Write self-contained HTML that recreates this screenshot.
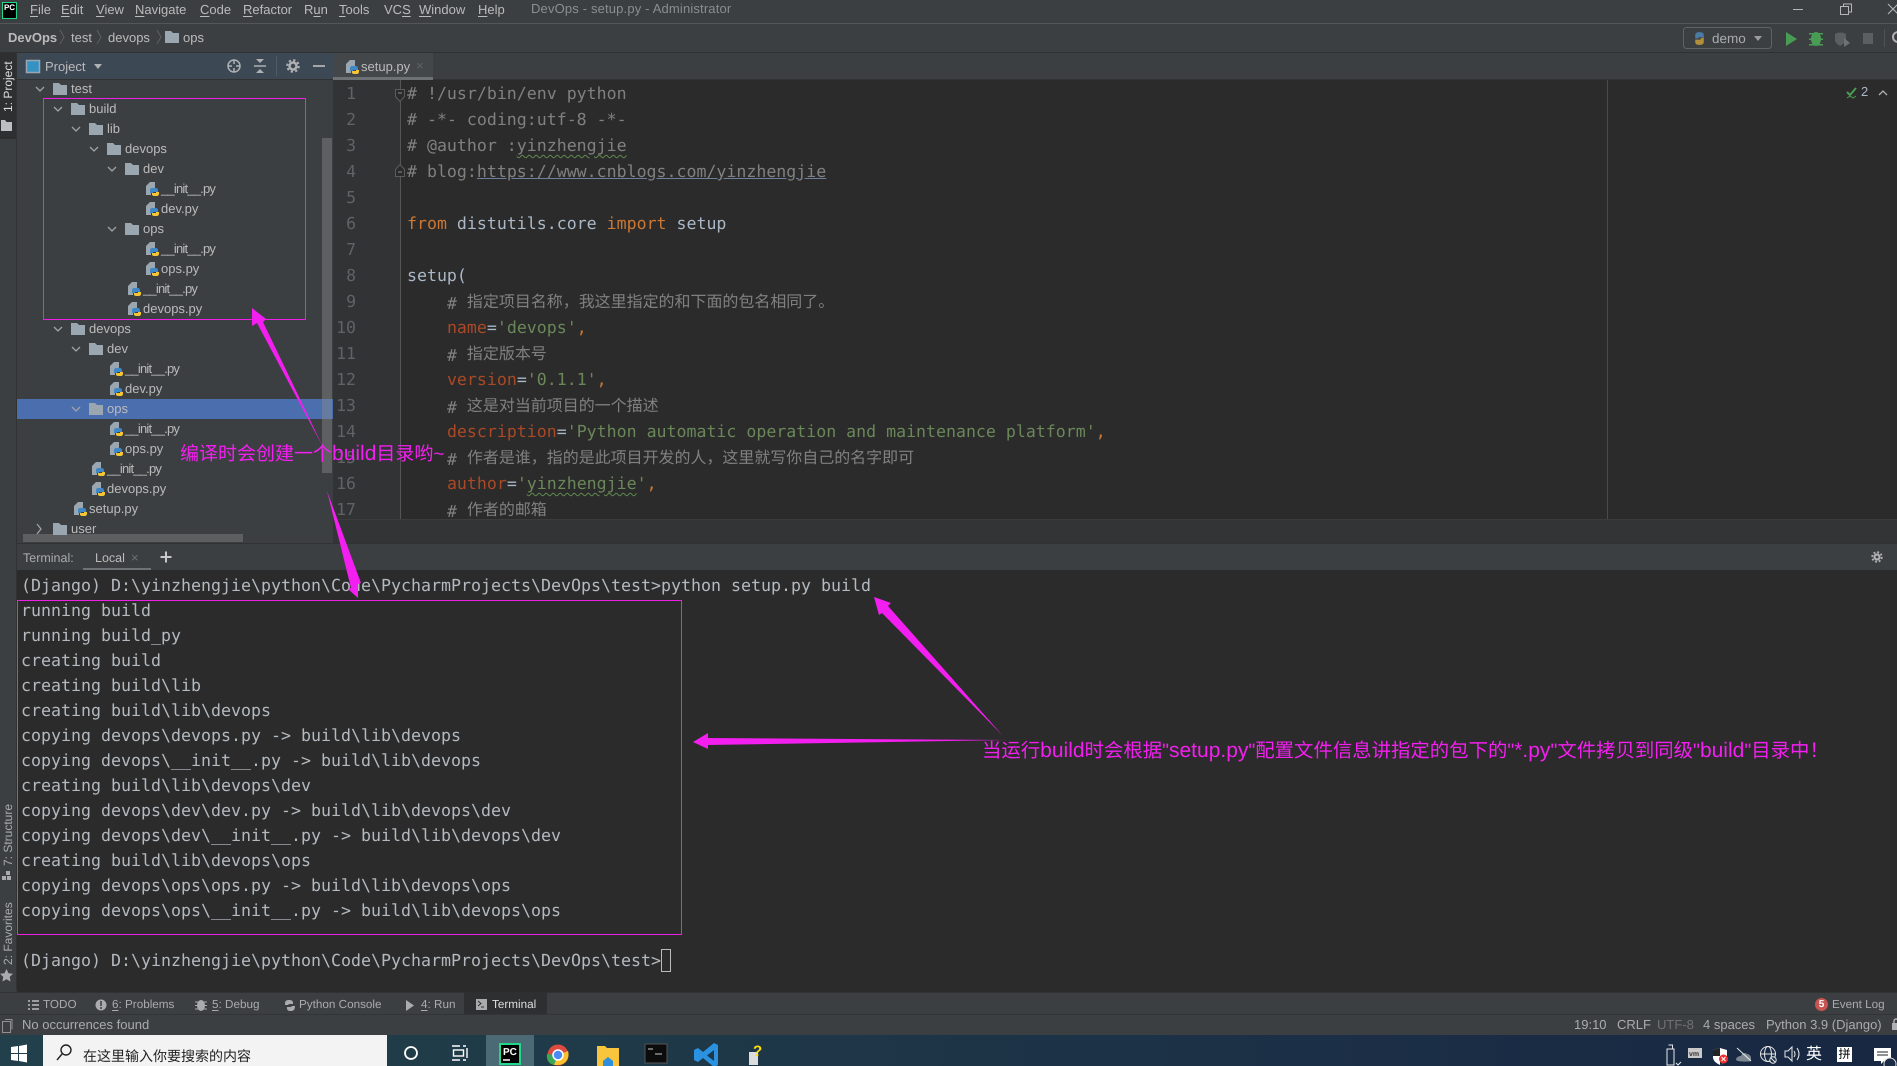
<!DOCTYPE html>
<html lang="zh"><head><meta charset="utf-8"><title>DevOps - setup.py</title>
<style>
html,body{margin:0;padding:0;width:1897px;height:1066px;overflow:hidden;background:#3c3f41}
body{position:relative;font-family:"Liberation Sans","Noto Sans CJK SC",sans-serif;font-size:13px;color:#bbb;text-rendering:geometricPrecision}
.a{position:absolute}
.t{position:absolute;white-space:pre;line-height:20px;height:20px}
.r{position:absolute;white-space:pre;line-height:20px;height:20px;color:#bbb;font-size:13px}
.i{letter-spacing:-.8px}
.c{position:absolute;left:0;white-space:pre;font-family:"DejaVu Sans Mono","Noto Sans CJK SC",monospace;font-size:16.58px;line-height:26px;height:26px;color:#a9b7c6}
.c b{font-weight:normal;font-size:15.98px;font-family:"Noto Sans CJK SC",sans-serif;color:#808080;position:relative;top:-2px}
.g{color:#808080}.k{color:#cc7832}.n{color:#aa4926}.s{color:#6a8759}
.w{text-decoration:underline wavy #5f8a4f 1px;text-underline-offset:3px}
.u{text-decoration:underline;color:#808080;text-decoration-color:#6e7f9e}
.ln{position:absolute;left:333px;width:23px;text-align:right;font-family:"DejaVu Sans Mono",monospace;font-size:16.5px;line-height:26px;color:#606366;white-space:pre}
.o{position:absolute;left:21px;white-space:pre;font-family:"DejaVu Sans Mono",monospace;font-size:16.62px;line-height:25px;height:25px;color:#b3b9bf}
.v{position:absolute;writing-mode:vertical-rl;transform:rotate(180deg);white-space:pre;font-size:12px;color:#bbb;line-height:16px}
.m u,.b u{text-underline-offset:2px}
.an{position:absolute;white-space:pre;color:#f31ff0;line-height:26px;height:26px}
.an i{font-style:normal;font-size:21px}
</style></head><body>

<!-- title and nav -->
<div class="a" style="left:0;top:0;width:1897px;height:23px;background:#3c3f41;border-bottom:1px solid #54575a"></div>
<div class="a" style="left:0;top:24px;width:1897px;height:28px;background:#3c3f41;border-bottom:1px solid #2f3132"></div>
<div class="m">
<span class="t" style="left:30px;top:0"><u>F</u>ile</span>
<span class="t" style="left:61px;top:0"><u>E</u>dit</span>
<span class="t" style="left:96px;top:0"><u>V</u>iew</span>
<span class="t" style="left:135px;top:0"><u>N</u>avigate</span>
<span class="t" style="left:200px;top:0"><u>C</u>ode</span>
<span class="t" style="left:243px;top:0"><u>R</u>efactor</span>
<span class="t" style="left:304px;top:0">R<u>u</u>n</span>
<span class="t" style="left:339px;top:0"><u>T</u>ools</span>
<span class="t" style="left:384px;top:0">VC<u>S</u></span>
<span class="t" style="left:419px;top:0"><u>W</u>indow</span>
<span class="t" style="left:478px;top:0"><u>H</u>elp</span>
<span class="t" style="left:531px;top:-1px;color:#8b8e90;letter-spacing:.16px">DevOps - setup.py - Administrator</span>
</div>
<span class="a" style="left:2px;top:2px;width:15px;height:17px;background:#000;border:1px solid #21d789;box-sizing:border-box;color:#fff;font:bold 8px/9px 'Liberation Sans',sans-serif;text-align:center">PC</span>
<span class="t" style="left:8px;top:28px;font-weight:bold;color:#bbb">DevOps</span>
<span class="t" style="left:71px;top:28px">test</span>
<span class="t" style="left:108px;top:28px">devops</span>
<span class="t" style="left:183px;top:28px">ops</span>

<!-- left stripe -->
<div class="a" style="left:0;top:53px;width:17px;height:938px;background:#3c3f41;border-right:1px solid #323232;box-sizing:border-box"></div>
<div class="a" style="left:0;top:53px;width:16px;height:86px;background:#2d2f30"></div>
<span class="v" style="left:0;top:62px;color:#ddd;height:50px">1: Project</span>
<span class="v" style="left:0;top:806px;height:60px;color:#a9abad">7: Structure</span>
<span class="v" style="left:0;top:905px;height:60px;color:#a9abad">2: Favorites</span>

<!-- project pane -->
<div class="a" style="left:17px;top:53px;width:316px;height:26px;background:#3d4855;border-bottom:1px solid #323232"></div>
<div class="a" style="left:17px;top:80px;width:316px;height:463px;background:#3c3f41"></div>
<span class="t" style="left:45px;top:57px;color:#bbb">Project</span>
<div class="a" style="left:17px;top:399px;width:316px;height:20px;background:#4b6eaf"></div>

<span class="r" style="left:71px;top:79px">test</span>
<span class="r" style="left:89px;top:99px">build</span>
<span class="r" style="left:107px;top:119px">lib</span>
<span class="r" style="left:125px;top:139px">devops</span>
<span class="r" style="left:143px;top:159px">dev</span>
<span class="r i" style="left:161px;top:179px">__init__.py</span>
<span class="r" style="left:161px;top:199px">dev.py</span>
<span class="r" style="left:143px;top:219px">ops</span>
<span class="r i" style="left:161px;top:239px">__init__.py</span>
<span class="r" style="left:161px;top:259px">ops.py</span>
<span class="r i" style="left:143px;top:279px">__init__.py</span>
<span class="r" style="left:143px;top:299px">devops.py</span>
<span class="r" style="left:89px;top:319px">devops</span>
<span class="r" style="left:107px;top:339px">dev</span>
<span class="r i" style="left:125px;top:359px">__init__.py</span>
<span class="r" style="left:125px;top:379px">dev.py</span>
<span class="r" style="left:107px;top:399px">ops</span>
<span class="r i" style="left:125px;top:419px">__init__.py</span>
<span class="r" style="left:125px;top:439px">ops.py</span>
<span class="r i" style="left:107px;top:459px">__init__.py</span>
<span class="r" style="left:107px;top:479px">devops.py</span>
<span class="r" style="left:89px;top:499px">setup.py</span>
<span class="r" style="left:71px;top:519px">user</span>

<div class="a" style="left:322px;top:138px;width:10px;height:335px;background:rgba(140,140,140,.42)"></div>
<div class="a" style="left:23px;top:534px;width:220px;height:8px;background:#5c5e60"></div>
<div class="a" style="left:43px;top:98px;width:261px;height:220px;border:1px solid #ef1fe8"></div>

<!-- editor -->
<div class="a" style="left:333px;top:53px;width:1564px;height:26px;background:#3c3f41;border-bottom:1px solid #323232"></div>
<div class="a" style="left:333px;top:53px;width:100px;height:27px;background:#43474a"></div>
<div class="a" style="left:333px;top:77px;width:100px;height:3px;background:#6e7275"></div>
<span class="t" style="left:361px;top:57px;color:#bbb">setup.py</span>
<span class="t" style="left:416px;top:56px;color:#5f6264">×</span>
<div class="a" style="left:333px;top:80px;width:1564px;height:439px;background:#2b2b2b;overflow:hidden"></div>
<div class="a" style="left:333px;top:80px;width:67px;height:439px;background:#313335;border-right:1px solid #555;overflow:hidden"></div>
<div class="a" style="left:1607px;top:80px;width:1px;height:439px;background:#4a4a4a"></div>
<div class="a" style="left:333px;top:519px;width:1564px;height:24px;background:#323436;border-top:1px solid #3a3c3d;box-sizing:border-box"></div>

<div class="ln" style="top:81px;height:438px;overflow:hidden">1
2
3
4
5
6
7
8
9
10
11
12
13
14
15
16
17</div>
<div class="a" style="left:407px;top:81px;width:1190px;height:438px;overflow:hidden">
<div class="c" style="top:0"><span class="g"># !/usr/bin/env python</span></div>
<div class="c" style="top:26px"><span class="g"># -*- coding:utf-8 -*-</span></div>
<div class="c" style="top:52px"><span class="g"># @author :<span class="w">yinzhengjie</span></span></div>
<div class="c" style="top:78px"><span class="g"># blog:<span class="u">https://www.cnblogs.com/yinzhengjie</span></span></div>
<div class="c" style="top:130px"><span class="k">from</span> distutils.core <span class="k">import</span> setup</div>
<div class="c" style="top:182px">setup(</div>
<div class="c" style="top:208px">    <span class="g"># </span><b>指定项目名称，我这里指定的和下面的包名相同了。</b></div>
<div class="c" style="top:234px">    <span class="n">name</span>=<span class="s">'devops'</span><span class="k">,</span></div>
<div class="c" style="top:260px">    <span class="g"># </span><b>指定版本号</b></div>
<div class="c" style="top:286px">    <span class="n">version</span>=<span class="s">'0.1.1'</span><span class="k">,</span></div>
<div class="c" style="top:312px">    <span class="g"># </span><b>这是对当前项目的一个描述</b></div>
<div class="c" style="top:338px">    <span class="n">description</span>=<span class="s">'Python automatic operation and maintenance platform'</span><span class="k">,</span></div>
<div class="c" style="top:364px">    <span class="g"># </span><b>作者是谁，指的是此项目开发的人，这里就写你自己的名字即可</b></div>
<div class="c" style="top:390px">    <span class="n">author</span>=<span class="s">'<span class="w">yinzhengjie</span>'</span><span class="k">,</span></div>
<div class="c" style="top:416px">    <span class="g"># </span><b>作者的邮箱</b></div>
</div>
<span class="t" style="left:1861px;top:82px;color:#a9b7c6">2</span>

<!-- terminal -->
<div class="a" style="left:17px;top:543px;width:1880px;height:27px;background:#3c3f41;border-top:1px solid #323232;box-sizing:border-box"></div>
<span class="t" style="left:23px;top:548px;font-size:12.5px;color:#a9abad">Terminal:</span>
<span class="t" style="left:95px;top:548px;font-size:12.5px;color:#bbb">Local</span>
<span class="t" style="left:131px;top:548px;color:#6c6f71">×</span>
<div class="a" style="left:83px;top:568px;width:68px;height:3px;background:#6e7275"></div>
<div class="a" style="left:17px;top:570px;width:1880px;height:422px;background:#2b2b2b"></div>
<div class="o" style="top:573px">(Django) D:\yinzhengjie\python\Code\PycharmProjects\DevOps\test&gt;python setup.py build</div>
<div class="o" style="top:598px">running build</div>
<div class="o" style="top:623px">running build_py</div>
<div class="o" style="top:648px">creating build</div>
<div class="o" style="top:673px">creating build\lib</div>
<div class="o" style="top:698px">creating build\lib\devops</div>
<div class="o" style="top:723px">copying devops\devops.py -&gt; build\lib\devops</div>
<div class="o" style="top:748px">copying devops\__init__.py -&gt; build\lib\devops</div>
<div class="o" style="top:773px">creating build\lib\devops\dev</div>
<div class="o" style="top:798px">copying devops\dev\dev.py -&gt; build\lib\devops\dev</div>
<div class="o" style="top:823px">copying devops\dev\__init__.py -&gt; build\lib\devops\dev</div>
<div class="o" style="top:848px">creating build\lib\devops\ops</div>
<div class="o" style="top:873px">copying devops\ops\ops.py -&gt; build\lib\devops\ops</div>
<div class="o" style="top:898px">copying devops\ops\__init__.py -&gt; build\lib\devops\ops</div>
<div class="o" style="top:948px">(Django) D:\yinzhengjie\python\Code\PycharmProjects\DevOps\test&gt;</div>
<div class="a" style="left:661px;top:949px;width:10px;height:23px;border:1px solid #bbb;box-sizing:border-box"></div>
<div class="a" style="left:17px;top:600px;width:663px;height:333px;border:1px solid #ef1fe8"></div>

<!-- bottom bars -->
<div class="a" style="left:0;top:992px;width:1897px;height:22px;background:#3c3f41;border-top:1px solid #323232;box-sizing:border-box"></div>
<div class="a" style="left:0;top:1014px;width:1897px;height:21px;background:#3c3f41;border-top:1px solid #323435;box-sizing:border-box"></div>
<div class="a" style="left:464px;top:992px;width:83px;height:22px;background:#2d2f30"></div>
<div class="b" style="font-size:11.7px;color:#a9abad">
<span class="t" style="left:43px;top:995px">TODO</span>
<span class="t" style="left:112px;top:995px"><u>6</u>: Problems</span>
<span class="t" style="left:212px;top:995px"><u>5</u>: Debug</span>
<span class="t" style="left:299px;top:995px">Python Console</span>
<span class="t" style="left:421px;top:995px"><u>4</u>: Run</span>
<span class="t" style="left:492px;top:995px;color:#ddd">Terminal</span>
<span class="t" style="left:1832px;top:995px">Event Log</span>
</div>
<span class="a" style="left:1815px;top:998px;width:13px;height:13px;border-radius:7px;background:#c75450;color:#fff;font:bold 10px/13px 'Liberation Sans',sans-serif;text-align:center">5</span>
<div style="color:#a9abad">
<span class="t" style="left:22px;top:1015px">No occurrences found</span>
<span class="t" style="left:1574px;top:1015px">19:10</span>
<span class="t" style="left:1617px;top:1015px">CRLF</span>
<span class="t" style="left:1657px;top:1015px;color:#6e7072">UTF-8</span>
<span class="t" style="left:1703px;top:1015px">4 spaces</span>
<span class="t" style="left:1766px;top:1015px">Python 3.9 (Django)</span>
</div>

<!-- taskbar -->
<div class="a" style="left:0;top:1035px;width:1897px;height:31px;background:linear-gradient(90deg,#21404b 0,#1f3a48 30%,#1b2f46 70%,#182742 100%)"></div>
<div class="a" style="left:43px;top:1035px;width:344px;height:31px;background:#f3f3f3"></div>
<span class="t" style="left:83px;top:1046px;color:#222;font-size:14px">在这里输入你要搜索的内容</span>
<div class="a" style="left:486px;top:1035px;width:48px;height:31px;background:#4c6a76"></div>
<span class="t" style="left:1806px;top:1045px;color:#fff;font-size:16px">英</span>
<span class="a" style="left:1837px;top:1047px;width:15px;height:15px;background:#fff;color:#000;font-size:12px;line-height:15px;text-align:center">拼</span>

<!-- graphics overlay -->
<svg class="a" style="left:0;top:0" width="1897" height="1066" viewBox="0 0 1897 1066" xmlns="http://www.w3.org/2000/svg">
<defs>
<symbol id="f" viewBox="0 0 14 14" overflow="visible"><path d="M0 1h6l2 2h6v10H0z" fill="#9aa7b0"/></symbol>
<symbol id="p" viewBox="0 0 14 15" overflow="visible"><path d="M1 4l4-4h5v7H6v6H1z" fill="#9aa7b0"/><path d="M5 10V8c0-1 1-2 2-2h4c1 0 2 1 2 2v2H8v1H5z" fill="#3f87c6"/><path d="M14 9v3c0 1-1 2-2 2H9c-1 0-2-1-2-1v-2h4v-1h3z" fill="#f4c534"/></symbol>
<symbol id="d" viewBox="0 0 10 6" overflow="visible"><path d="M1 1l4 4 4-4" fill="none" stroke="#a0a3a5" stroke-width="1.3"/></symbol>
<symbol id="py" viewBox="0 0 14 14" overflow="visible"><path d="M3 7V4c0-2 1-3 4-3s4 1 4 3v2H6v1z" fill="#4b7aa3"/><path d="M11 6v4c0 2-1 3-4 3s-4-1-4-3V8h5V7z" fill="#b08e3a"/></symbol>
</defs>

<!-- title chevrons + folder nav -->
<g fill="none" stroke="#5e6163" stroke-width="1"><path d="M60 30l4 7-4 7M97 30l4 7-4 7M157 30l4 7-4 7"/></g>
<use href="#f" x="165" y="30" width="14" height="14"/>
<!-- window controls -->
<g fill="none" stroke="#b4b6b8" stroke-width="1"><path d="M1793 9.5h10"/><path d="M1840.5 6.5h8v8h-8zM1843.5 6.5v-2.500h8v8h-3"/><path d="M1888 4l10 10M1898 4l-10 10"/></g>
<!-- run config -->
<rect x="1683.500" y="27.500" width="88" height="21" rx="3" fill="none" stroke="#5f6264"/>
<use href="#py" x="1692" y="31" width="15" height="15"/>
<text x="1712" y="43" font-family="Liberation Sans,sans-serif" font-size="13.500" fill="#a9abad">demo</text>
<path d="M1754 36h8l-4 5z" fill="#9a9c9e"/>
<path d="M1786 32l11 7-11 7z" fill="#499c54"/>
<g fill="#499c54"><ellipse cx="1816" cy="39" rx="5" ry="7"/><path d="M1809 33l14 0v1.500h-14zM1809 38.500h14v1.500h-14zM1809 44h14v1.500h-14z"/></g>
<path d="M1835 34c3-2 8-2 11 0v7c-2 2-4 4-6 5-2-1-4-3-5-5z" fill="#5c5f61"/><path d="M1844 38l6 5-6 4z" fill="#6f7274"/>
<rect x="1863" y="33" width="10" height="11" fill="#5c5f61"/>
<path d="M1884.500 29v18" stroke="#505355"/>
<circle cx="1898" cy="37" r="5" fill="none" stroke="#afb1b3" stroke-width="2"/>
<!-- project header icons -->
<rect x="26.500" y="60.500" width="13" height="12" fill="#3592c4" stroke="#9aa7b0" stroke-width="1.500"/>
<path d="M94 64h8l-4 5z" fill="#afb1b3"/>
<g fill="none" stroke="#afb1b3"><circle cx="234" cy="66" r="6" stroke-width="1.500"/><path d="M234 60v4M234 68v4M228 66h4M236 66h4" stroke-width="1.500"/><path d="M254 66h12" stroke-width="1.500"/></g>
<path d="M256 59h8l-4 4zM256 73h8l-4-4z" fill="#afb1b3"/>
<path d="M276.500 56v20" stroke="#4f5b68"/>
<g fill="none" stroke="#afb1b3"><circle cx="293" cy="66" r="3.500" stroke-width="2.500"/><circle cx="293" cy="66" r="5.800" stroke-width="2" stroke-dasharray="2.300 2.250"/><path d="M313 66h12" stroke-width="1.800"/></g>
<!-- tree -->
<use href="#d" x="35" y="86" width="10" height="6"/>
<use href="#d" x="53" y="106" width="10" height="6"/>
<use href="#d" x="71" y="126" width="10" height="6"/>
<use href="#d" x="89" y="146" width="10" height="6"/>
<use href="#d" x="107" y="166" width="10" height="6"/>
<use href="#d" x="107" y="226" width="10" height="6"/>
<use href="#d" x="53" y="326" width="10" height="6"/>
<use href="#d" x="71" y="346" width="10" height="6"/>
<use href="#d" x="71" y="406" width="10" height="6"/>
<path d="M37 524l4 5-4 5" fill="none" stroke="#a0a3a5" stroke-width="1.300"/>
<use href="#f" x="53" y="82" width="14" height="14"/>
<use href="#f" x="71" y="102" width="14" height="14"/>
<use href="#f" x="89" y="122" width="14" height="14"/>
<use href="#f" x="107" y="142" width="14" height="14"/>
<use href="#f" x="125" y="162" width="14" height="14"/>
<use href="#f" x="125" y="222" width="14" height="14"/>
<use href="#f" x="71" y="322" width="14" height="14"/>
<use href="#f" x="89" y="342" width="14" height="14"/>
<use href="#f" x="89" y="402" width="14" height="14"/>
<use href="#f" x="53" y="522" width="14" height="14"/>
<use href="#p" x="145" y="182" width="14" height="15"/>
<use href="#p" x="145" y="202" width="14" height="15"/>
<use href="#p" x="145" y="242" width="14" height="15"/>
<use href="#p" x="145" y="262" width="14" height="15"/>
<use href="#p" x="127" y="282" width="14" height="15"/>
<use href="#p" x="127" y="302" width="14" height="15"/>
<use href="#p" x="109" y="362" width="14" height="15"/>
<use href="#p" x="109" y="382" width="14" height="15"/>
<use href="#p" x="109" y="422" width="14" height="15"/>
<use href="#p" x="109" y="442" width="14" height="15"/>
<use href="#p" x="91" y="462" width="14" height="15"/>
<use href="#p" x="91" y="482" width="14" height="15"/>
<use href="#p" x="73" y="502" width="14" height="15"/>
<use href="#p" x="345" y="60" width="14" height="15"/>
<!-- folds -->
<g fill="#2b2b2b" stroke="#5a5d5f"><path d="M395.500 89.500h9v7l-4.500 5-4.500-5z"/><path d="M395.500 176.500v-7l4.500-5 4.500 5v7z"/></g>
<path d="M398 93h4M398 172h4" stroke="#888"/>
<!-- inspection -->
<path d="M1847 92l3 3 6-7" fill="none" stroke="#499c54" stroke-width="2"/><path d="M1847 98l3-2 3 2 3-2" fill="none" stroke="#499c54"/>
<path d="M1879 95l4-4 4 4" fill="none" stroke="#afb1b3" stroke-width="1.300"/>
<!-- terminal icons -->
<path d="M166 551.500v11M160.500 557h11" stroke="#c8c8c8" stroke-width="2"/>
<g fill="none" stroke="#afb1b3"><circle cx="1877" cy="557" r="2.500" stroke-width="2.200"/><circle cx="1877" cy="557" r="4.800" stroke-width="1.800" stroke-dasharray="2 1.770"/></g>
<!-- side stripe icons -->
<path d="M1 120h4l1.500 2H12v9H1z" fill="#bcbfc1"/>
<g fill="#a9abad"><rect x="6" y="871" width="4" height="4"/><rect x="2" y="876" width="4" height="4"/><rect x="7" y="876" width="4" height="4"/></g>
<path d="M6.500 969l2 4.300 4.500.5-3.300 3.100.9 4.600-4.100-2.300-4.100 2.300.9-4.600L0 973.800l4.500-.5z" fill="#a9abad"/>
<!-- tool bar icons -->
<path d="M28 1001h2M32 1001h7M28 1005h2M32 1005h7M28 1009h2M32 1009h7" stroke="#a9abad" stroke-width="1.800"/>
<circle cx="101" cy="1005" r="5.500" fill="#a9abad"/><path d="M101 1001v5M101 1007v2" stroke="#3c3f41" stroke-width="1.500"/>
<ellipse cx="201" cy="1005.500" rx="4" ry="5.500" fill="#a9abad"/><path d="M195 1002h12M195 1005.500h12M195 1009h12" stroke="#a9abad"/>
<path d="M285 1004c0-3 1-4 4-4s4 1 4 3v1h-4.500v1H285zM295 1006c0 3-1 5-4 5s-4-1-4-3v-1h4.500v-1z" fill="#a9abad"/>
<path d="M406 1000l8 5.500-8 5.500z" fill="#a9abad"/>
<rect x="476" y="999" width="11" height="11" fill="#a9abad"/><path d="M478 1001l3 2.500-3 2.500M481 1007h3" fill="none" stroke="#2d2f30"/>
<!-- status icons -->
<path d="M2.500 1021.500h8v11h-8zM5 1019.500h7v10" fill="none" stroke="#8f9193"/>
<rect x="1892" y="1023" width="8" height="7" fill="#afb1b3"/><path d="M1894 1023v-2a2 2 0 0 1 4 0" stroke="#afb1b3" fill="none" stroke-width="1.500"/>
<!-- taskbar icons -->
<g fill="#fff"><path d="M11 1047l7-1v7h-7zM19 1046l8-1.500v8.500h-8zM11 1054h7v7l-7-1zM19 1054h8v8.500l-8-1.500z"/></g>
<g fill="none" stroke="#222" stroke-width="1.400"><circle cx="66" cy="1050" r="5"/><path d="M62 1054l-5 6"/></g>
<circle cx="411" cy="1053" r="6" fill="none" stroke="#fff" stroke-width="1.800"/>
<g fill="none" stroke="#fff" stroke-width="1.400"><rect x="453.500" y="1050" width="10" height="6"/><path d="M452 1046h8M463 1046h3M452 1060h8M463 1060h3M467 1048v10"/></g>
<rect x="500" y="1044" width="20" height="20" fill="#000" stroke="#21d789" stroke-width="2"/>
<text x="503" y="1055" font-family="Liberation Sans,sans-serif" font-size="10" font-weight="bold" fill="#fff">PC</text><path d="M503 1060h7" stroke="#fff" stroke-width="1.500"/>
<circle cx="558" cy="1055" r="10.500" fill="#dd4b3e"/><path d="M558 1055l-4 10c-5-1-8-5-7-11z" fill="#3aa757"/><path d="M558 1055l10-4c2 7-2 14-10 14h-4z" fill="#fbc02d"/><circle cx="558" cy="1055" r="5" fill="#4a8bf5" stroke="#fff" stroke-width="1.500"/>
<path d="M597 1046h8l2 2h12v18h-22z" fill="#f8c53c"/><path d="M603 1061l5-4 5 4v5h-10z" fill="#2f8fdd"/>
<rect x="645" y="1044" width="22" height="19" fill="#0c0c0c" stroke="#555"/><path d="M648 1049h5M655 1054h7" stroke="#ccc"/>
<path d="M714 1043l-11 9-5-4-4 2v10l4 2 5-4 11 9 4-2v-20zM714 1050v11l-7-5.500z" fill="#2a92e0"/>
<path d="M749 1052h9v13h-9z" fill="#ddd"/><text x="753" y="1056" font-family="Liberation Sans,sans-serif" font-size="15" font-weight="bold" fill="#ffe000">?</text>
<!-- tray -->
<g fill="none" stroke="#e8e8e8"><path d="M1667 1049h7v16h-7zM1668.500 1045h4v4"/><path d="M1676 1063l2 2 3-3"/></g>
<rect x="1688" y="1048" width="14" height="10" fill="#c9c9c9"/><text x="1689" y="1056" font-family="Liberation Sans,sans-serif" font-size="7" font-weight="bold" fill="#333">vm</text>
<path d="M1713 1050l7-2 7 2v7c0 4-3 6-7 8-4-2-7-4-7-8z" fill="#fff"/><path d="M1713 1056h7v-8l-7 2zM1720 1056h7v1c-1 4-3 6-7 8z" fill="#222"/>
<circle cx="1723.500" cy="1059" r="4.500" fill="#e33"/><path d="M1721.500 1057l4 4M1725.500 1057l-4 4" stroke="#fff"/>
<path d="M1736 1060c0-3 3-4 5-4 1-3 4-4 6-2 2 0 4 2 4 4v3c-2 1-13 1-15-1z" fill="#7d8794"/><path d="M1737 1048l14 13" stroke="#e8e8e8"/>
<g fill="none" stroke="#e8e8e8"><circle cx="1768" cy="1054" r="7.500"/><ellipse cx="1768" cy="1054" rx="3.500" ry="7.500"/><path d="M1760.500 1054h15"/><circle cx="1773" cy="1060" r="3.200" fill="#1a2c44"/><path d="M1771 1058l4 4"/></g>
<g fill="none" stroke="#e8e8e8"><path d="M1785 1051h3l4-4v14l-4-4h-3z"/><path d="M1794 1051q2 3 0 6M1797 1048q4 6 0 12"/></g>
<path d="M1874 1048h17v13h-7l-3 3v-3h-7z" fill="#fff"/><path d="M1877 1052h11M1877 1055h11" stroke="#222"/>
<circle cx="1890" cy="1064" r="6" fill="#1a2c44" stroke="#ddd"/>
<!-- annotation arrows -->
<g fill="#f31ff0">
<path d="M252 308l14 11-3 3 60 125-66-124-5 3z"/>
<path d="M327 491l34 92-3 1 0 14-10-9 3-1z"/>
<path d="M874 597l17 6-3 3 115 130-121-123-3 2z"/>
<path d="M693 742l15-9v5l300 2-300 5v4z"/>
</g>
<path d="M322 445v17" stroke="#f31ff0" stroke-width="1"/>
</svg>

<div class="an" style="left:180px;top:441px;font-size:19px">编译时会创建一个<i>build</i>目录哟~</div>
<div class="an" style="left:982px;top:738px;font-size:19.4px">当运行<i>build</i>时会根据"<i>setup.py</i>"配置文件信息讲指定的包下的"<i>*.py</i>"文件拷贝到同级"<i>build</i>"目录中！</div>
</body></html>
